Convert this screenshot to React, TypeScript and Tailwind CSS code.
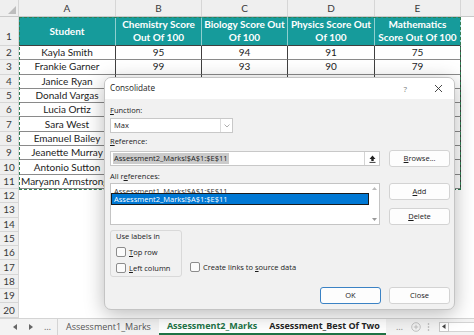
import React from 'react'

const COL_W = ['w-[97px]', 'w-[86px]', 'w-[86px]', 'w-[87px]', 'w-[86px]']
const LETTERS = ['A', 'B', 'C', 'D', 'E']

const HEADERS: React.ReactNode[] = [
  'Student',
  <>Chemistry Score<br />Out Of 100</>,
  <>Biology Score Out<br />Of 100</>,
  <>Physics Score Out<br />Of 100</>,
  <>Mathematics<br />Score Out Of 100</>,
]

const ROWS: (string | number)[][] = [
  ['Kayla Smith', 95, 94, 91, 75],
  ['Frankie Garner', 99, 93, 90, 79],
  ['Janice Ryan', '', '', '', ''],
  ['Donald Vargas', '', '', '', ''],
  ['Lucia Ortiz', '', '', '', ''],
  ['Sara West', '', '', '', ''],
  ['Emanuel Bailey', '', '', '', ''],
  ['Jeanette Murray', '', '', '', ''],
  ['Antonio Sutton', '', '', '', ''],
  ['Maryann Armstrong', '', '', '', ''],
]

function RowNum({ n }: { n: number }) {
  return (
    <div className="flex w-[19px] shrink-0 items-center justify-center border-r border-b border-[#d6d6d6] bg-[#efefef] text-[#3a3a3a]">
      {n}
    </div>
  )
}

function Check({ label }: { label: React.ReactNode }) {
  return (
    <div className="flex items-center gap-[3px] h-[10px]">
      <div className="h-[10px] w-[10px] rounded-[2px] border border-[#8c8c8c] bg-[#fbfbfb]" />
      <span className="leading-[10px]">{label}</span>
    </div>
  )
}

function Btn({ children, primary }: { children: React.ReactNode; primary?: boolean }) {
  return (
    <div
      className={`flex h-[17px] w-[61px] items-center justify-center rounded-[3px] border bg-[#fdfdfd] ${
        primary ? 'border-[#3b82c4]' : 'border-[#d3d3d3]'
      }`}
    >
      {children}
    </div>
  )
}

export default function App() {
  return (
    <div className="relative h-[335px] w-[474px] overflow-hidden bg-white font-['Lato',sans-serif] text-[10px] text-[#1c1c1c]">
      <div className="flex h-full flex-col">
        {/* column letters */}
        <div className="flex h-[17px] shrink-0 border-b border-[#c9c9c9] bg-[#efefef] text-[#3a3a3a]">
          <div className="relative w-[19px] border-r border-[#d6d6d6]">
            <svg className="absolute right-[2px] bottom-[2px]" width="8" height="8">
              <path d="M8 0V8H0Z" fill="#bdbdbd" />
            </svg>
          </div>
          {LETTERS.map((l, i) => (
            <div key={l} className={`${COL_W[i]} flex items-center justify-center border-r border-[#d6d6d6]`}>
              {l}
            </div>
          ))}
          <div className="flex-1" />
        </div>

        {/* row 1 */}
        <div className="flex h-[29px] shrink-0">
          <div className="flex w-[19px] shrink-0 items-end justify-center border-r border-b border-[#d6d6d6] bg-[#efefef] pb-[1px] text-[#3a3a3a]">
            1
          </div>
          {HEADERS.map((h, i) => (
            <div
              key={i}
              className={`${COL_W[i]} flex items-center justify-center border-r border-b border-r-[#8fcfcf] border-b-[#3f3f3f] bg-[#169b9b] text-center font-bold leading-[13px] text-white`}
            >
              {h}
            </div>
          ))}
          <div className="flex-1" />
        </div>

        {/* data rows */}
        {ROWS.map((r, ri) => (
          <div key={ri} className="flex h-[14.3px] shrink-0">
            <RowNum n={ri + 2} />
            {r.map((v, ci) => (
              <div
                key={ci}
                className={`${COL_W[ci]} flex items-center whitespace-nowrap border-r border-b border-r-[#404040] border-b-[#8a8a8a] ${
                  ri === 9 && ci === 0 ? 'justify-start pl-[2px]' : 'justify-center'
                }`}
              >
                {v}
              </div>
            ))}
            <div className="flex-1" />
          </div>
        ))}

        {/* empty rows */}
        {[12, 13, 14, 15, 16, 17, 18, 19, 20].map(n => (
          <div key={n} className="flex h-[14.3px] shrink-0">
            <RowNum n={n} />
            <div className="flex-1" />
          </div>
        ))}

        {/* sheet tabs */}
        <div className="flex flex-1 items-stretch border-t border-[#d4d4d4] bg-[#f3f3f3] font-['Open_Sans',sans-serif] text-[9px] text-[#555]">
          <div className="flex w-[58px] items-center border-r border-[#d4d4d4] pl-[13px] text-[#666]">
            <svg width="5" height="6"><path d="M4 0V6L0 3Z" fill="#666" /></svg>
            <svg className="ml-[11px]" width="5" height="6"><path d="M0 0V6L4 3Z" fill="#666" /></svg>
            <span className="ml-[10px] leading-none">…</span>
          </div>
          <div className="flex items-center pl-[8px] pr-[8px]">Assessment1_Marks</div>
          <div className="flex items-center border-b-2 border-[#217346] bg-white pl-[8px] pr-[4px] font-bold text-[#217346]">
            Assessment2_Marks
          </div>
          <div className="flex items-center border-b-2 border-[#217346] bg-white pl-[8px] pr-[6px] font-bold text-[#262626]">
            Assessment_Best Of Two
          </div>
          <div className="flex items-center pl-[10px] text-[#888]">
            <span className="leading-none">…</span>
            <svg className="ml-[8px]" width="10" height="10">
              <circle cx="5" cy="5" r="4.3" fill="none" stroke="#b5b5b5" strokeWidth="0.8" />
              <path d="M5 2.8V7.2M2.8 5H7.2" stroke="#b5b5b5" strokeWidth="0.8" />
            </svg>
            <svg className="ml-[6px]" width="3" height="10">
              <circle cx="1.5" cy="2" r="0.8" fill="#aaa" />
              <circle cx="1.5" cy="5" r="0.8" fill="#aaa" />
              <circle cx="1.5" cy="8" r="0.8" fill="#aaa" />
            </svg>
          </div>
          <div className="ml-[9px] mt-[3px] mb-[3px] flex w-[10px] items-center justify-center border border-[#c8c8c8] bg-white">
            <svg width="4" height="5"><path d="M3.5 0V5L0 2.5Z" fill="#444" /></svg>
          </div>
          <div className="mt-[3px] mb-[3px] flex-1 border-y border-[#d4d4d4] bg-white" />
        </div>
      </div>

      {/* copy marquee */}
      <div className="pointer-events-none absolute left-[19px] top-[17px] h-[173px] w-[442px] border border-dashed border-[#2f7d52]" />

      {/* Consolidate dialog */}
      <div className="absolute left-[104px] top-[77px] h-[233px] w-[351px] overflow-hidden rounded-[7px] border border-[#c4c4c4] bg-[#f1f1f1] font-['Open_Sans',sans-serif] text-[7.5px] text-[#1b1b1b] shadow-[0_4px_20px_rgba(0,0,0,0.28)]">
        <div className="flex h-[21px] items-center bg-white pl-[5px]">
          <span className="text-[8.2px]">Consolidate</span>
          <span className="ml-auto mr-[27px] text-[8px] text-[#777]">?</span>
          <svg className="mr-[11px]" width="9" height="9">
            <path d="M1 1L8 8M8 1L1 8" stroke="#333" strokeWidth="0.9" />
          </svg>
        </div>

        <div className="flex flex-col pl-[5px] pr-[4px]">
          <div className="mt-[5px] h-[12px] leading-[12px]">
            <u>F</u>unction:
          </div>
          <div className="mt-[2px] flex h-[15px] w-[123px] items-center border border-[#c8c8c8] bg-white">
            <span className="flex-1 pl-[3px]">Max</span>
            <div className="flex h-full w-[12px] items-center justify-center border-l border-[#dcdcdc]">
              <svg width="6" height="4"><path d="M0.5 0.5L3 3L5.5 0.5" fill="none" stroke="#999" strokeWidth="0.8" /></svg>
            </div>
          </div>

          <div className="mt-[2px] h-[12px] leading-[12px]">
            <u>R</u>eference:
          </div>
          <div className="mt-[3px] flex items-center gap-[9px]">
            <div className="flex h-[15px] w-[271px] items-center border border-[#c8c8c8] bg-white">
              <span className="ml-[2px] bg-[#cbcbcb] px-[1px] leading-[11px]">Assessment2_Marks!$A$1:$E$11</span>
              <div className="ml-auto flex h-full w-[15px] items-center justify-center border-l border-[#d4d4d4]">
                <svg width="7" height="8">
                  <path d="M3.5 0.5L0.5 4H2.3V6H4.7V4H6.5Z" fill="#222" />
                  <path d="M0.5 7.4H6.5" stroke="#222" strokeWidth="0.9" />
                </svg>
              </div>
            </div>
            <Btn>
              <span>
                <u>B</u>rowse...
              </span>
            </Btn>
          </div>

          <div className="mt-[3px] h-[12px] leading-[12px]">
            All r<u>e</u>ferences:
          </div>
          <div className="mt-[1px] flex gap-[9px]">
            <div className="flex h-[42px] w-[271px] border border-[#c4c4c4] bg-white">
              <div className="flex-1 overflow-hidden">
                <div className="h-[9px] overflow-hidden pl-[3px] leading-[14px] text-[#333]">
                  Assessment1_Marks!$A$1:$E$11
                </div>
                <div className="h-[12px] border border-[#1a1a1a] bg-[#0078d4] pl-[2px] leading-[10px] text-white">
                  Assessment2_Marks!$A$1:$E$11
                </div>
              </div>
              <div className="flex w-[10px] flex-col items-center justify-between py-[3px]">
                <svg width="5" height="3"><path d="M0 3H5L2.5 0Z" fill="#bbb" /></svg>
                <svg width="5" height="3"><path d="M0 0H5L2.5 3Z" fill="#999" /></svg>
              </div>
            </div>
            <div className="flex flex-col gap-[8px]">
              <Btn>
                <span>
                  <u>A</u>dd
                </span>
              </Btn>
              <Btn>
                <span>
                  <u>D</u>elete
                </span>
              </Btn>
            </div>
          </div>

          <div className="mt-[5px] flex items-end gap-[8px]">
            <div className="h-[47px] w-[72px] rounded-[3px] border border-[#d9d9d9] px-[5px]">
              <div className="mt-[1px] h-[9px] leading-[9px]">Use labels in</div>
              <div className="mt-[6px]">
                <Check label={<><u>T</u>op row</>} />
              </div>
              <div className="mt-[6px]">
                <Check label={<><u>L</u>eft column</>} />
              </div>
            </div>
            <div className="mb-[5px]">
              <Check label={<>Create links to <u>s</u>ource data</>} />
            </div>
          </div>

          <div className="mt-[10px] flex justify-end gap-[8px]">
            <Btn primary>OK</Btn>
            <Btn>Close</Btn>
          </div>
        </div>
      </div>
    </div>
  )
}
